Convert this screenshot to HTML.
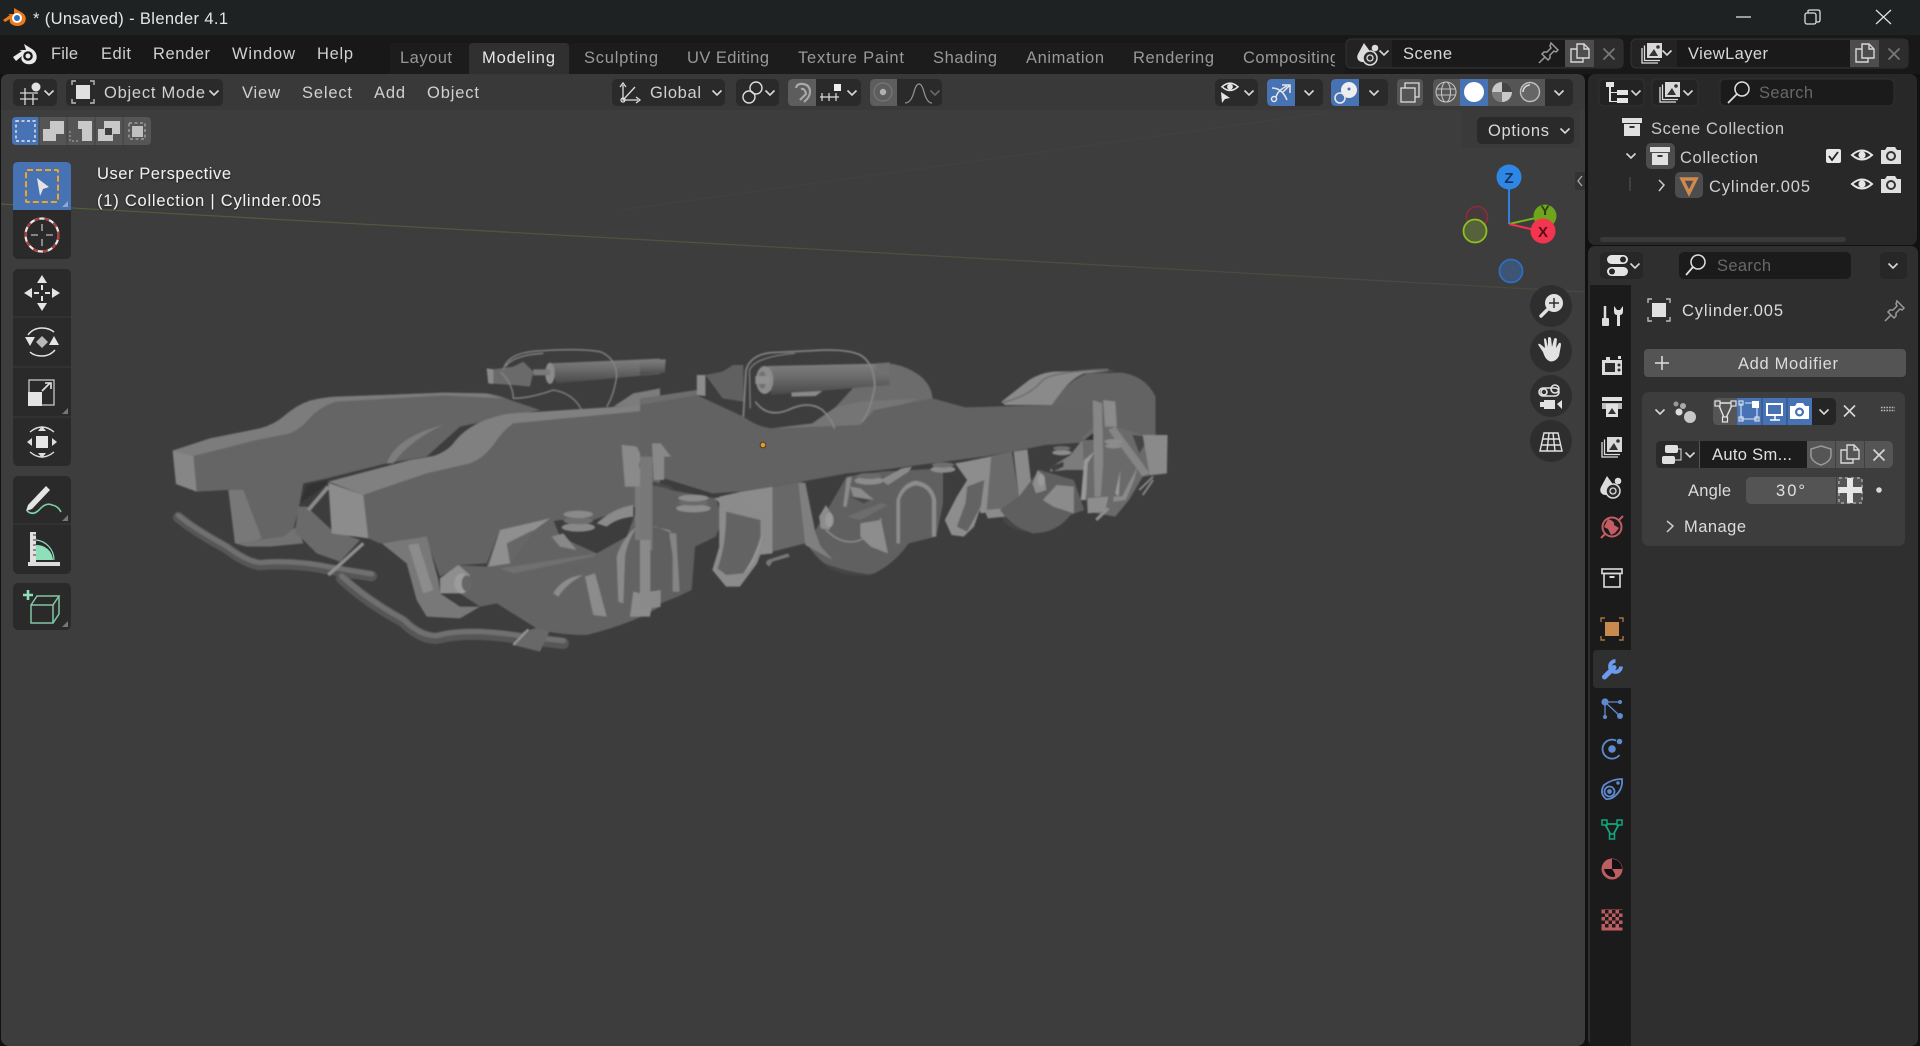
<!DOCTYPE html>
<html><head><meta charset="utf-8"><title>Blender 4.1</title>
<style>html,body{margin:0;padding:0;background:#111;overflow:hidden}svg{display:block}text{font-family:"Liberation Sans",sans-serif;font-size:16.5px;fill:#d0d0d0}</style></head>
<body>
<svg width="1920" height="1046" viewBox="0 0 1920 1046" xmlns="http://www.w3.org/2000/svg">
<defs>
<path id="c" d="M-4.5-2.5 0 2 4.5-2.5" fill="none" stroke="#d8d8d8" stroke-width="1.6"/>
<path id="x" d="M-5.5-5.5 5.5 5.5M5.5-5.5-5.5 5.5" fill="none" stroke="#d8d8d8" stroke-width="1.6"/>
<g id="copy" fill="none" stroke="#d8d8d8" stroke-width="1.4"><path d="M-3-9H4L9-4V5H-3Z"/><path d="M4-9V-4H9"/><path d="M-3-4H-9V9H3V5"/></g>
<g id="eye"><path d="M-10 0Q0-9 10 0Q0 9-10 0Z" fill="none" stroke="#e6e6e6" stroke-width="2"/><circle r="3.6" fill="#e6e6e6"/></g>
<g id="cam"><path d="M-10-6H-6L-4-9H4L6-6H10V8H-10Z" fill="#e0e0e0"/><circle r="5" fill="#333"/><circle r="3" fill="#e0e0e0"/></g>
<g id="obj"><path d="M-11-7V-11H-7M7-11H11V-7M11 7V11H7M-7 11H-11V7" fill="none" stroke-width="1.4"/><rect x="-7" y="-7" width="14" height="14" stroke="none"/></g>
<g id="img" fill="none" stroke="#ddd" stroke-width="1.3"><path d="M-10-5V10H6"/><path d="M-7.500-7.500V7.500H8"/><rect x="-5" y="-10" width="15" height="15" fill="#d8d8d8" stroke="none"/><path d="M-3 3 2-4 6 3Z" fill="#333" stroke="none"/><circle cx="6" cy="-6" r="1.800" fill="#333" stroke="none"/></g>
<g id="scene"><path d="M-4-11C0-5 3-3 2 2C0 6-2 8-5 8C-10 8-12 4-10 0Z" fill="#dcdcdc"/><circle cx="7" cy="-6" r="3.300" fill="#dcdcdc"/><circle cx="2" cy="4" r="7" fill="#2b2b2b" stroke="#dcdcdc" stroke-width="1.500"/><circle cx="2" cy="4" r="3" fill="none" stroke="#dcdcdc" stroke-width="1.300"/></g>
<g id="pin" fill="none" stroke="#9a9a9a" stroke-width="1.500"><path d="M2-10 9-3 7-1 5-2 1 2 1 5-1 7-7 1-5-1H-2L2-5 1-7Z"/><path d="M-4 4-10 10"/></g>
<g id="box"><rect x="-10" y="-9" width="20" height="5" fill="#e0e0e0"/><path d="M-8-3H8V9H-8Z" fill="#e0e0e0"/><rect x="-2.500" y="-1" width="5" height="2" fill="#333"/></g>
<linearGradient id="cy" x1="0" y1="0" x2="0" y2="1"><stop offset="0" stop-color="#7e7e7e"/><stop offset=".45" stop-color="#6a6a6a"/><stop offset="1" stop-color="#484848"/></linearGradient>
<linearGradient id="gl" x1="0" y1="0" x2="1" y2="0"><stop offset="0" stop-color="#4f6038"/><stop offset=".4" stop-color="#4b5640"/><stop offset="1" stop-color="#47483f"/></linearGradient>
<clipPath id="tabclip"><rect x="1230" y="36" width="105" height="36"/></clipPath>
<clipPath id="vp"><rect x="1" y="74" width="1584" height="972" rx="8"/></clipPath>
<filter id="bl" x="-5%" y="-5%" width="110%" height="110%"><feGaussianBlur stdDeviation=".7"/></filter>
<filter id="ts" x="-5%" y="-20%" width="110%" height="140%"><feDropShadow dx="0" dy="1" stdDeviation="1" flood-color="#000" flood-opacity=".6"/></filter>
</defs>

<rect width="1920" height="1046" fill="#111"/>
<rect width="1920" height="35" fill="#1e2223"/>
<rect y="35" width="1920" height="39" fill="#181818"/>

<!-- title bar -->
<path d="M3 20 10 15 8 14H14L14 8 21 12C25 14 27 18 25 22C23 26 17 27 13 25C10 24 9 21 10 19L5 22Z" fill="#ec7a1b"/>
<circle cx="17" cy="18" r="5" fill="#fff"/><circle cx="17" cy="18" r="3" fill="#2a6fb5"/>
<text x="33" y="24" textLength="195" style="fill:#e6e6e6">* (Unsaved) - Blender 4.1</text>
<path d="M1736 17H1751" stroke="#ddd" stroke-width="1.300"/>
<g fill="none" stroke="#ddd" stroke-width="1.300"><rect x="1805" y="13" width="11" height="11" rx="2"/><path d="M1808 13V11Q1808 10 1810 10H1818Q1820 10 1820 12V20Q1820 22 1818 22H1816"/><path d="M1876 10 1891 24M1891 10 1876 24"/></g>

<!-- top bar -->
<g transform="translate(25,54)"><path d="M-12 3-3-3-6-4H1L-1-10 7-5C12-2 13 4 10 8C7 11 1 11-2 8C-4 6-4 4-3 2L-9 7Z" fill="#eaeaea"/><circle cx="3" cy="2" r="4.800" fill="#181818"/><circle cx="3" cy="2" r="2.500" fill="#eaeaea"/></g>
<text x="51" y="59" textLength="27">File</text><text x="101" y="59" textLength="30">Edit</text><text x="153" y="59" textLength="57">Render</text><text x="232" y="59" textLength="63">Window</text><text x="317" y="59" textLength="36">Help</text>
<rect x="390" y="43" width="955" height="31" fill="#1c1c1c"/>
<path d="M469 74V47Q469 43 473 43H565Q569 43 569 47V74Z" fill="#303030"/>
<text x="400" y="63" textLength="52" style="fill:#999">Layout</text><text x="482" y="63" textLength="73" style="fill:#e6e6e6">Modeling</text><text x="584" y="63" textLength="74" style="fill:#999">Sculpting</text><text x="687" y="63" textLength="82" style="fill:#999">UV Editing</text><text x="798" y="63" textLength="106" style="fill:#999">Texture Paint</text><text x="933" y="63" textLength="64" style="fill:#999">Shading</text><text x="1026" y="63" textLength="78" style="fill:#999">Animation</text><text x="1133" y="63" textLength="81" style="fill:#999">Rendering</text><text x="1243" y="63" textLength="96" clip-path="url(#tabclip)" style="fill:#999">Compositing</text>

<!-- scene selector -->
<rect x="1346" y="39" width="277" height="29" rx="5" fill="#232323" stroke="#333"/>
<rect x="1392" y="40" width="173" height="27" fill="#1a1a1a"/>
<rect x="1565" y="40" width="29" height="27" fill="#4d4d4d"/><rect x="1594" y="40" width="29" height="27" fill="#2d2d2d"/>
<use href="#scene" x="1368" y="54"/><use href="#c" x="1384" y="53"/>
<text x="1403" y="59" textLength="49" style="fill:#d8d8d8">Scene</text>
<use href="#pin" x="1549" y="53"/><use href="#copy" x="1580" y="53"/><g opacity=".45"><use href="#x" x="1609" y="54"/></g>
<rect x="1631" y="39" width="277" height="29" rx="5" fill="#232323" stroke="#333"/>
<rect x="1677" y="40" width="173" height="27" fill="#1a1a1a"/>
<rect x="1850" y="40" width="29" height="27" fill="#4d4d4d"/><rect x="1879" y="40" width="29" height="27" fill="#2d2d2d"/>
<use href="#img" x="1652" y="53"/><use href="#c" x="1667" y="53"/>
<text x="1688" y="59" textLength="80" style="fill:#d8d8d8">ViewLayer</text>
<use href="#copy" x="1865" y="53"/><g opacity=".45"><use href="#x" x="1894" y="54"/></g>

<!-- viewport -->
<rect x="1" y="74" width="1584" height="972" rx="8" fill="#3d3d3d"/>
<path d="M1 110V82Q1 74 9 74H1577Q1585 74 1585 82V110Z" fill="#393939"/>
<g clip-path="url(#vp)">
<rect x="0" y="200" width="1585" height="96" fill="none"/>
<path d="M0 204 1585 292" stroke="url(#gl)" stroke-width="1.200" fill="none"/>
<path d="M620 210 1325 113" stroke="#424242" stroke-width="1"/>
</g>

<!-- MODEL -->
<g filter="url(#bl)">
<g transform="translate(160,330) scale(.33333)">
<!-- far frame -->
<path d="M48 462 38 362 150 325 300 295Q340 285 370 260Q410 225 450 212Q490 202 530 200L850 188 980 190Q1020 195 1050 210L1140 240 900 290 800 380 680 400 500 445 430 460 415 540 400 600 360 635 270 640 225 640 205 480 110 485Z" fill="#656565"/>
<path d="M38 362 150 325 300 295Q340 285 370 260Q410 225 450 212Q490 202 530 200L850 188 980 190 1030 205 850 196 530 215Q490 225 455 258Q425 295 390 310L290 330 100 378Z" fill="#7b7b7b"/>
<path d="M38 362 100 378 110 485 48 462Z" fill="#868686"/>
<path d="M205 480 250 480 305 625 260 640 225 640Z" fill="#787878"/>
<path d="M225 640 370 620 410 590 430 640 330 650 260 650Z" fill="#727272"/>
<path d="M680 400Q710 320 850 285Q750 330 700 400Z" fill="#7d7d7d"/>
<path d="M415 530 440 530 515 600 600 630 540 695 470 670 430 630 405 610Z" fill="#6b6b6b"/>
<path d="M445 540 505 470" stroke="#8a8a8a" stroke-width="12" fill="none"/>
<path d="M420 520 440 465 505 450 500 465Z" fill="#333"/>
<!-- pipes -->
<path d="M55 562Q100 600 200 655Q260 700 300 705Q400 695 520 720L635 738" fill="none" stroke="#565656" stroke-width="32" stroke-linecap="round" stroke-linejoin="round"/>
<path d="M55 556Q100 594 200 649Q260 694 300 698Q400 688 520 713L635 732" fill="none" stroke="#6f6f6f" stroke-width="15" stroke-linecap="round" stroke-linejoin="round"/>
<path d="M545 745Q620 815 730 875Q780 925 830 925Q920 900 1080 925L1210 940" fill="none" stroke="#565656" stroke-width="34" stroke-linecap="round" stroke-linejoin="round"/>
<path d="M545 738Q620 808 730 868Q780 918 830 917Q920 892 1080 917L1210 932" fill="none" stroke="#6f6f6f" stroke-width="16" stroke-linecap="round" stroke-linejoin="round"/>
<path d="M505 735 610 640" stroke="#8f8f8f" stroke-width="10"/>
<path d="M1090 905 1180 880 1140 965 1060 945Z" fill="#686868"/>
<path d="M1060 945 1105 898" stroke="#999" stroke-width="6"/>
<!-- near frame -->
<path d="M610 495 800 430 930 400Q970 385 1000 345Q1030 300 1060 280L1500 238 1500 560 1420 530 1300 570 1200 570 1020 600 980 700 900 705 840 740 800 630 700 635 660 640 625 625Z" fill="#636363"/>
<path d="M505 455 750 390 820 378Q860 365 880 340Q920 285 1000 262Q1030 252 1060 250L1500 222 1500 238 1060 280Q1030 300 1000 345Q970 385 930 400L800 430 610 495Z" fill="#808080"/>
<path d="M505 458 610 495 625 625 515 610Z" fill="#8c8c8c"/>
<path d="M665 640 800 620 835 750 840 790 900 830 960 830 900 865 800 860 770 810 740 700Z" fill="#787878"/>
<path d="M745 645 775 640 820 780 790 790Z" fill="#8c8c8c"/>
<path d="M840 745 890 705 980 710 1020 600 1180 570 1200 620 1310 670 1400 620 1430 540 1500 540 1500 830Q1420 880 1280 915Q1190 915 1130 895L1010 820 960 830 900 790Z" fill="#636363"/>
<path d="M985 710 1020 600 1130 575 1170 565 1110 610 1050 700Z" fill="#8f8f8f"/>
<path d="M1040 640 1120 600 1110 620 1050 700Z" fill="#666"/>
<path d="M1175 620 1210 610 1250 660 1200 650Z" fill="#888"/>
<ellipse cx="1255" cy="592" rx="50" ry="13" fill="#888"/><ellipse cx="1255" cy="572" rx="44" ry="11" fill="#6e6e6e"/><ellipse cx="1255" cy="553" rx="44" ry="11" fill="#8a8a8a"/>
<path d="M1310 580Q1360 535 1420 525V560Q1370 565 1340 590Z" fill="#8a8a8a"/>
<path d="M1180 790Q1210 740 1270 735Q1220 760 1195 800Z" fill="#8c8c8c"/>
<path d="M1275 740 1305 730 1340 860 1300 855Z" fill="#8c8c8c"/>
<path d="M1370 680Q1390 620 1430 590 1400 640 1395 680L1390 820 1375 815Z" fill="#8a8a8a"/>
<path d="M840 745 895 705 930 735 910 790 840 790Z" fill="#8e8e8e"/>
<ellipse cx="905" cy="760" rx="22" ry="30" fill="#9c9c9c"/><ellipse cx="920" cy="760" rx="15" ry="24" fill="#666"/>
<path d="M1020 715 1310 670 1300 680 1060 730Z" fill="#6f6f6f"/>
<!-- damper -->
<path d="M1385 345 1430 350 1450 390 1450 470 1395 470Z" fill="#8a8a8a"/><path d="M1470 340 1500 340 1500 420 1475 420Z" fill="#8a8a8a"/>
<rect x="1425" y="470" width="55" height="160" fill="#7a7a7a"/><rect x="1445" y="630" width="30" height="170" fill="#8a8a8a"/><circle cx="1455" cy="405" r="18" fill="#666"/><rect x="1452" y="410" width="24" height="60" fill="#5f5f5f"/>
<path d="M1410 860 1420 785 1480 800 1470 860Z" fill="#8c8c8c"/>
<!-- far lump top right -->
<path d="M1360 230 1420 190 1500 175 1500 225Z" fill="#7c7c7c"/>
<!-- cylinder -->
<path d="M1165 100 1500 86V132L1190 160Z" fill="url(#cy)"/>
<ellipse cx="1170" cy="130" rx="14" ry="32" fill="#8b8b8b"/><rect x="1120" y="118" width="50" height="18" fill="#7a7a7a"/>
<path d="M980 115 1000 118 1060 110 1090 95 1120 125 1110 170 1060 165 985 160Z" fill="#6a6a6a"/><path d="M980 115 1000 118 1000 162 985 160Z" fill="#8a8a8a"/>
<g fill="none" stroke="#858585" stroke-width="4"><path d="M1030 120Q1040 65 1150 62Q1260 55 1320 65Q1370 85 1370 140Q1360 200 1340 230"/><path d="M1022 125Q1060 165 1060 205Q1110 205 1180 180Q1240 190 1265 240"/><path d="M1036 110Q1060 75 1150 70"/></g>
</g>
<g transform="translate(640,330) scale(.34435,.33333)">
<!-- far lump -->
<path d="M560 240 640 150 720 100Q770 105 810 135Q850 165 850 215L780 220 680 280 570 285Z" fill="#6c6c6c"/>
<path d="M500 280 570 230 640 215 810 205 720 240 670 270 640 290 380 295Z" fill="#747474"/>
<path d="M0 205 165 180 165 235 0 235Z" fill="#6d6d6d"/>
<!-- rear lobe -->
<path d="M1050 215 1130 150Q1160 130 1200 125L1380 122 1290 130Q1240 150 1200 225L1060 225Z" fill="#8a8a8a"/>
<path d="M1190 235Q1240 150 1300 130L1400 128Q1470 140 1497 200V320L1400 330 1100 350 950 235Z" fill="#636363"/>
<path d="M1050 218Q1130 200 1170 150Q1200 125 1360 118" fill="none" stroke="#707070" stroke-width="5"/>
<!-- main -->
<path d="M0 225 165 195 300 260Q340 290 380 295L640 285 680 240 850 205 945 232 1200 225 1300 240 1320 270 1280 325 1200 340 1080 365 1010 378 700 420 600 430 470 455 290 485 210 490 70 445 0 445Z" fill="#626262"/>
<!-- under left -->
<path d="M40 460 90 480 220 505 240 570 220 620 160 650 150 780 110 800 60 820 0 830 0 470Z" fill="#5f5f5f"/>
<path d="M30 465 100 480 90 470 40 455Z" fill="#484848"/>
<ellipse cx="155" cy="535" rx="50" ry="12" fill="#8c8c8c"/><ellipse cx="155" cy="518" rx="44" ry="9" fill="#6a6a6a"/><ellipse cx="155" cy="504" rx="44" ry="10" fill="#8c8c8c"/>
<path d="M85 610 105 610 115 785 95 785 95 680Z" fill="#858585"/>
<path d="M35 590 85 600 95 610 45 590Z" fill="#858585"/>
<rect x="0" y="380" width="36" height="280" fill="#787878"/><rect x="0" y="630" width="30" height="170" fill="#8a8a8a"/>
<path d="M35 340 60 340 90 380 70 380 70 450 40 450Z" fill="#888"/>
<path d="M0 790 60 780 60 830 0 840Z" fill="#8a8a8a"/>
<!-- block -->
<path d="M295 485 385 470 385 670 300 680 230 700 230 500Z" fill="#8c8c8c"/>
<path d="M385 470 470 455 480 640 385 665Z" fill="#676767"/>
<path d="M215 505Q255 530 245 600L210 720 250 770 290 770 340 700 365 630 375 545 330 545 290 490Z" fill="#8b8b8b"/>
<path d="M250 545 350 570 350 620Q330 690 300 730L250 735 225 715Q250 650 250 545Z" fill="#636363"/>
<path d="M300 730Q350 660 360 590 355 650 320 710Z" fill="#9a9a9a"/>
<path d="M370 690 430 670 435 680 385 695 375 710 365 700Z" fill="#777"/>
<!-- wheel 1 -->
<path d="M490 650Q530 710 590 730Q640 740 680 730Q740 700 780 640L860 620 880 520 880 415 700 425 600 440 510 600Z" fill="#606060"/>
<path d="M525 695Q590 725 680 735 600 745 550 715Z" fill="#444"/>
<path d="M460 460 480 458 510 610 525 650 560 690 480 645Z" fill="#7f7f7f"/>
<path d="M615 440 600 445 590 530 600 530Z" fill="#8a8a8a"/>
<path d="M520 560 540 525 560 560 550 600 525 595Z" fill="#8c8c8c"/><ellipse cx="550" cy="570" rx="12" ry="22" fill="#9a9a9a"/>
<path d="M610 470 640 475 680 510 620 500Z" fill="#8a8a8a"/><path d="M610 500 670 510 650 520Z" fill="#474747"/>
<ellipse cx="665" cy="452" rx="42" ry="12" fill="#8c8c8c"/><ellipse cx="665" cy="438" rx="36" ry="9" fill="#6a6a6a"/>
<path d="M700 450 760 415 790 410 780 425 720 465Z" fill="#8a8a8a"/>
<path d="M640 580 700 570 720 670 670 650 640 620Z" fill="#8d8d8d"/>
<path d="M640 570 720 525 700 520 600 560Z" fill="#6d6d6d"/>
<path d="M540 600Q590 650 640 630Q680 610 700 565" fill="none" stroke="#8c8c8c" stroke-width="4"/>
<path d="M745 640V510Q760 460 800 452Q850 460 860 510V620H848V510Q840 470 800 466Q765 475 755 510V640Z" fill="#8c8c8c"/>
<ellipse cx="880" cy="418" rx="36" ry="10" fill="#8c8c8c"/><ellipse cx="880" cy="405" rx="32" ry="8" fill="#6e6e6e"/>
<!-- brake 2 -->
<path d="M945 395 1025 378 1020 545 990 550 960 470Z" fill="#8d8d8d"/>
<path d="M1020 378 1080 365 1100 500 1040 545 1005 555Z" fill="#6a6a6a"/>
<path d="M915 400 945 395Q990 440 1000 500L970 590 940 620 905 615 885 570 920 500 950 450Z" fill="#8d8d8d"/>
<path d="M950 470 1000 450 990 530 950 605 920 590 945 520Z" fill="#636363"/>
<path d="M1085 365 1125 358 1140 495 1100 500Z" fill="#8a8a8a"/>
<path d="M1000 540 1060 535 1060 560 1010 565Z" fill="#8b8b8b"/>
<!-- wheel 2 -->
<path d="M1045 540Q1085 595 1140 610Q1210 610 1250 555L1290 540 1260 450 1160 420 1100 500Z" fill="#5f5f5f"/>
<path d="M1055 560Q1090 595 1140 608 1090 605 1055 575Z" fill="#464646"/>
<path d="M1140 460 1155 420 1175 440 1180 480 1150 490Z" fill="#8d8d8d"/><ellipse cx="1165" cy="450" rx="10" ry="18" fill="#9a9a9a"/>
<path d="M1170 510 1210 465 1260 470 1260 550 1200 530Z" fill="#8b8b8b"/>
<path d="M1195 410 1250 375 1280 335 1310 335 1290 420 1240 420 1190 425Z" fill="#7b7b7b"/>
<ellipse cx="1225" cy="368" rx="28" ry="8" fill="#8c8c8c"/><ellipse cx="1225" cy="355" rx="25" ry="7" fill="#6d6d6d"/>
<path d="M1190 410 1230 395 1230 410 1200 425Z" fill="#3f3f3f"/>
<!-- rear section right -->
<path d="M1285 320 1320 290 1380 290 1460 315 1530 315 1530 430 1460 440 1420 510 1380 560 1300 545 1290 430Z" fill="#6a6a6a"/>
<path d="M1290 330 1340 290 1320 330Z" fill="#333"/>
<path d="M1430 315 1480 320 1450 370Z" fill="#454545"/>
<path d="M1460 315 1532 315 1530 430 1480 435Z" fill="#8a8a8a"/>
<path d="M1380 290 1480 430 1460 440 1360 300Z" fill="#858585"/>
<ellipse cx="1375" cy="335" rx="26" ry="8" fill="#8c8c8c"/><ellipse cx="1375" cy="348" rx="24" ry="7" fill="#8c8c8c"/>
<path d="M1345 210 1380 215 1385 290 1350 290Z" fill="#8b8b8b"/>
<path d="M1315 210 1342 220 1345 400 1338 500 1320 500Z" fill="#868686"/>
<path d="M1280 510 1290 390 1320 365 1300 400 1295 510Z" fill="#999"/>
<path d="M1300 505 1360 500 1350 545 1300 550Z" fill="#8d8d8d"/>
<path d="M1325 570 1360 535" stroke="#8e8e8e" stroke-width="9"/>
<path d="M1380 490 1395 420 1390 500Z" fill="#999"/><path d="M1400 500 1430 440 1445 410 1435 450 1410 510 1375 515 1375 500Z" fill="#8b8b8b"/>
<path d="M1450 480 1490 440M1460 495 1490 450" stroke="#8f8f8f" stroke-width="5"/>
<!-- cylinder 1 end -->
<path d="M0 90 75 88 72 128 0 135Z" fill="url(#cy)"/>
<!-- block and cylinder 2 -->
<path d="M190 135 240 125 270 105 300 105 300 215 240 205Z" fill="#606060"/>
<path d="M165 135 190 135 190 198 165 195Z" fill="#8c8c8c"/>
<path d="M370 108 725 100 725 165 380 195Z" fill="url(#cy)"/>
<path d="M685 100 725 97 725 130 685 130Z" fill="#707070"/>
<ellipse cx="362" cy="150" rx="25" ry="42" fill="#8c8c8c"/><ellipse cx="355" cy="150" rx="12" ry="26" fill="#6f6f6f"/><rect x="335" y="138" width="40" height="24" fill="#909090"/>
<path d="M440 188 530 183 510 198 440 200Z" fill="#8a8a8a"/>
<g fill="none" stroke="#858585" stroke-width="5" stroke-linejoin="round"><path d="M300 260 308 120Q320 75 380 68L500 62Q600 55 640 75Q680 100 682 170Q670 240 645 275"/><path d="M335 215Q370 265 430 240Q490 210 530 240Q555 265 565 295"/></g>
<path d="M320 235 318 120Q335 80 450 70" fill="none" stroke="#8f8f8f" stroke-width="3"/>
</g>
</g>
<circle cx="763" cy="445" r="3.400" fill="#2a2a2a" opacity=".6"/><circle cx="763" cy="445" r="2.300" fill="#f5941a"/>

<!-- header row -->
<rect x="13" y="79" width="44" height="27" rx="5" fill="#2a2a2a"/>
<g stroke="#d8d8d8" stroke-width="1.300" fill="none"><path d="M20 93H38M20 99H38M25 88V105M33 94V105"/></g><circle cx="36" cy="87" r="4.500" fill="#e2e2e2"/><use href="#c" x="49" y="93"/>
<rect x="66" y="79" width="157" height="27" rx="5" fill="#2a2a2a"/>
<use href="#obj" x="83" y="92" fill="#e0e0e0" stroke="#bbb"/>
<text x="104" y="98" textLength="101">Object Mode</text><use href="#c" x="214" y="93"/>
<text x="242" y="98" textLength="38">View</text><text x="302" y="98" textLength="50">Select</text><text x="374" y="98" textLength="31">Add</text><text x="427" y="98" textLength="52">Object</text>

<rect x="612" y="79" width="113" height="27" rx="5" fill="#2a2a2a"/>
<g stroke="#ddd" stroke-width="1.300" fill="none"><path d="M623 85V100H638"/><path d="M623 100 635 87"/><path d="M620 87 623 83 626 87M636 97 640 100 636 103"/><circle cx="623" cy="100" r="2"/></g>
<text x="650" y="98" textLength="51">Global</text><use href="#c" x="717" y="93"/>
<rect x="736" y="79" width="43" height="27" rx="5" fill="#2a2a2a"/>
<g fill="none" stroke="#ddd" stroke-width="1.400"><circle cx="749" cy="97" r="6"/><circle cx="756" cy="88" r="6"/></g><use href="#c" x="770" y="93"/>
<rect x="788" y="79" width="73" height="27" rx="5" fill="#2a2a2a"/><path d="M793 79H816V106H793Q788 106 788 101V84Q788 79 793 79Z" fill="#5d5d5d"/>
<path d="M796 88Q797 83 803 84Q810 85 810 92Q810 97 804 102M800 100 806 94Q805 88 801 89" fill="none" stroke="#a8a8a8" stroke-width="2.200"/>
<g stroke="#ddd" stroke-width="1.200"><path d="M820 97H839M822 93V101M829 93V101M836 93V101"/></g><rect x="834" y="84" width="7" height="7" fill="#eee"/><use href="#c" x="852" y="93"/>
<rect x="870" y="79" width="72" height="27" rx="5" fill="#2a2a2a"/><path d="M875 79H897V106H875Q870 106 870 101V84Q870 79 875 79Z" fill="#5d5d5d"/>
<circle cx="883" cy="92" r="9" fill="none" stroke="#727272" stroke-width="1.500"/><circle cx="883" cy="92" r="3.200" fill="#b0b0b0"/>
<path d="M905 103Q911 103 914 92Q916 84 919 84Q922 84 924 92Q927 103 932 103" fill="none" stroke="#909090" stroke-width="1.300"/><g opacity=".35"><use href="#c" x="935" y="93"/></g>

<rect x="1215" y="79" width="43" height="27" rx="5" fill="#2a2a2a"/>
<g transform="translate(1230,90)"><use href="#eye" transform="scale(.8)" y="-4"/><path d="M-9 2-8 13-5 9 0 8Z" fill="#e6e6e6"/></g><use href="#c" x="1249" y="93"/>
<rect x="1267" y="79" width="56" height="27" rx="5" fill="#2a2a2a"/><path d="M1272 79H1295V106H1272Q1267 106 1267 101V84Q1267 79 1272 79Z" fill="#4772b3"/>
<g fill="none" stroke="#e8e8e8" stroke-width="1.500"><circle cx="1274" cy="99" r="2.500"/><path d="M1276 97Q1278 90 1287 86M1282 85H1290V93M1290 85 1283 92M1272 88Q1282 88 1287 100"/></g><use href="#c" x="1309" y="93"/>
<rect x="1331" y="79" width="57" height="27" rx="5" fill="#2a2a2a"/><path d="M1336 79H1359V106H1336Q1331 106 1331 101V84Q1331 79 1336 79Z" fill="#4772b3"/>
<circle cx="1349" cy="90" r="8" fill="#eee"/><circle cx="1340" cy="98" r="5" fill="none" stroke="#e8e8e8" stroke-width="1.600"/><circle cx="1349" cy="89" r="1.500" fill="#4772b3"/><use href="#c" x="1374" y="93"/>
<rect x="1397" y="79" width="26" height="27" rx="4" fill="#555"/>
<g fill="none" stroke="#ddd" stroke-width="1.300"><rect x="1401" y="88" width="14" height="14"/><path d="M1405 88V83H1419V97H1415"/></g>
<rect x="1433" y="79" width="140" height="27" rx="5" fill="#2a2a2a"/><path d="M1438 79H1545V106H1438Q1433 106 1433 101V84Q1433 79 1438 79Z" fill="#555"/><rect x="1460" y="79" width="28" height="27" fill="#4772b3"/>
<g fill="none" stroke="#c0c0c0" stroke-width="1.100"><circle cx="1446" cy="92" r="10"/><ellipse cx="1446" cy="92" rx="4.500" ry="10"/><path d="M1436 89H1456M1436 95H1456"/></g>
<circle cx="1474" cy="92" r="10" fill="#fff"/>
<circle cx="1502" cy="92" r="10" fill="#c8c8c8"/><path d="M1502 92V82A10 10 0 0 1 1512 92Z" fill="#444"/><path d="M1502 92H1492A10 10 0 0 0 1502 102Z" fill="#7a7a7a"/>
<circle cx="1530" cy="92" r="9.500" fill="#666" stroke="#c0c0c0" stroke-width="1.400"/><path d="M1523 92A7 7 0 0 1 1530 85" stroke="#ddd" fill="none" stroke-width="1.500"/>
<use href="#c" x="1559" y="93"/>
<rect x="1462" y="110" width="118" height="38" fill="#3a3a3a"/>
<rect x="1477" y="117" width="97" height="27" rx="5" fill="#2a2a2a"/><text x="1488" y="136" textLength="61" style="fill:#d8d8d8">Options</text><use href="#c" x="1565" y="131"/>
<rect x="1575" y="172" width="10" height="18" fill="#333"/><path d="M1582 176 1578 181 1582 186" fill="none" stroke="#aaa" stroke-width="1.300"/>

<!-- select mode row -->
<rect x="12" y="117" width="139" height="28" rx="4" fill="#555"/><path d="M16 117H39V145H16Q12 145 12 141V121Q12 117 16 117Z" fill="#4772b3"/>
<rect x="16" y="121" width="19" height="20" fill="none" stroke="#e8e8e8" stroke-width="1.400" stroke-dasharray="3 2.500"/>
<path d="M50 121H64V134H56V141H43V129H50Z" fill="#c8c8c8"/>
<path d="M78 121H92V141H82V129H78Z" fill="#c8c8c8"/><path d="M70 131V141H80" fill="none" stroke="#aaa" stroke-dasharray="2 2"/>
<path d="M104 121H120V134H113V141H98V129H104Z" fill="#c8c8c8"/><rect x="105" y="128" width="7" height="7" fill="#3d3d3d"/>
<rect x="129" y="123" width="16" height="16" fill="none" stroke="#aaa" stroke-width="1.300" stroke-dasharray="3 2.500"/><rect x="132" y="126" width="11" height="11" fill="#c0c0c0"/>
<g stroke="#3e3e3e"><path d="M67 117V145M95 117V145M123 117V145M39 117V145"/></g>

<!-- toolbar -->
<rect x="13" y="162" width="58" height="97" rx="5" fill="#2a2a2a"/><path d="M18 162H66Q71 162 71 167V210H13V167Q13 162 18 162Z" fill="#4772b3"/>
<rect x="26" y="170" width="32" height="32" rx="1" fill="none" stroke="#f0a428" stroke-width="2" stroke-dasharray="6 3"/>
<path d="M37 178 49 187 43 189 40 196Z" fill="#e4e4e4"/><path d="M62 207 68 201V207Z" fill="#8fa8d0"/>
<circle cx="42" cy="235" r="16.500" fill="none" stroke="#e8e8e8" stroke-width="2.200"/><circle cx="42" cy="235" r="16.500" fill="none" stroke="#b33a3a" stroke-width="2.200" stroke-dasharray="5 5"/>
<path d="M42 224V231M42 239V246M31 235H38M46 235H53" stroke="#bbb" stroke-width="1.300"/>
<rect x="13" y="269" width="58" height="197" rx="5" fill="#2a2a2a"/>
<path d="M13 317H71M13 367H71M13 417H71" stroke="#3a3a3a"/>
<g fill="#e4e4e4"><path d="M42 275 47 283H37ZM42 311 37 303H47ZM24 293 32 288V298ZM60 293 52 298V288Z"/><path d="M41 285H43V290H41ZM41 296H43V301H41ZM34 292H39V294H34ZM45 292H50V294H45Z"/></g>
<g fill="none" stroke="#e4e4e4" stroke-width="1.500"><path d="M28 335Q33 328 42 328Q49 328 54 332"/><path d="M55 350Q50 356 42 356Q34 356 30 352"/></g><path d="M25 337H35L30 346ZM49 345H59L54 336Z" fill="#e4e4e4"/><path d="M42 336 48 342 42 348 36 342Z" fill="#b8b8b8"/>
<rect x="29" y="380" width="25" height="25" fill="none" stroke="#c8c8c8" stroke-width="1.300"/><rect x="28" y="392" width="14" height="14" fill="#e4e4e4"/><path d="M42 391 50 383M45 383H51V389" fill="none" stroke="#e4e4e4" stroke-width="1.600"/><path d="M62 414 68 408V414Z" fill="#777"/>
<g fill="none" stroke="#ddd" stroke-width="1.400"><path d="M30 432Q36 427 42 427Q48 427 54 432M54 452Q48 457 42 457Q36 457 30 452"/></g><rect x="36" y="436" width="12" height="12" fill="#e6e6e6"/><path d="M42 426 46 431H38ZM42 458 38 453H46ZM27 442 32 438V446ZM57 442 52 446V438Z" fill="#ddd"/>
<rect x="13" y="476" width="58" height="98" rx="5" fill="#2a2a2a"/><path d="M13 524H71" stroke="#3a3a3a"/>
<path d="M28 505 46 486 50 490 32 509 26 511Z" fill="#e4e4e4"/><path d="M27 511Q33 516 39 510Q46 502 52 505Q58 506 61 512" fill="none" stroke="#7bd0a4" stroke-width="1.600"/><path d="M62 521 68 515V521Z" fill="#777"/>
<path d="M30 532H36V565H30Z" fill="#e0e0e0"/><path d="M36 535H33M36 540H33M36 545H33M36 550H33M36 555H33" stroke="#333"/><path d="M36 545A16 16 0 0 1 53 560H36Z" fill="#8ee0b8"/><path d="M36 540A20 20 0 0 1 54 560" fill="none" stroke="#8ee0b8" stroke-width="1.200"/><path d="M28 562H60V566H28Z" fill="#dcdcdc"/>
<rect x="13" y="583" width="58" height="47" rx="5" fill="#2a2a2a"/>
<path d="M28 590V600M23 595H33" stroke="#8ee0b8" stroke-width="2.600"/>
<g fill="none" stroke="#82c8a4" stroke-width="1.500"><path d="M31 605H53V623H31ZM31 605 37 596H59L53 605M59 596V614L53 623"/></g><path d="M62 627 68 621V627Z" fill="#777"/>

<g filter="url(#ts)"><text x="97" y="179" textLength="134" style="fill:#f0f0f0">User Perspective</text>
<text x="97" y="206" textLength="224" style="fill:#f0f0f0">(1) Collection | Cylinder.005</text></g>

<!-- gizmo -->
<circle cx="1477" cy="217" r="10.500" fill="#47393c" stroke="#8c2d3e" stroke-width="1.500"/>
<circle cx="1475" cy="231" r="11.500" fill="#56623a" stroke="#8ec01e" stroke-width="1.800"/>
<circle cx="1511" cy="271" r="11.500" fill="#3d5474" stroke="#2f6ec0" stroke-width="1.800"/>
<path d="M1509 224V188" stroke="#2e83e0" stroke-width="2"/><path d="M1509 224 1540 217" stroke="#79b31c" stroke-width="2"/><path d="M1509 224 1535 230" stroke="#f0324c" stroke-width="2"/>
<circle cx="1509" cy="177" r="12.500" fill="#2e86e6"/><circle cx="1545" cy="216" r="11.500" fill="#6ea51c"/><circle cx="1543" cy="231" r="12.500" fill="#f5344f"/>
<text x="1509" y="183" text-anchor="middle" style="fill:#14335a;font-weight:bold;font-size:15px">Z</text><text x="1545" y="215" text-anchor="middle" style="fill:#2a3f0c;font-weight:bold;font-size:14px">Y</text><text x="1543" y="237" text-anchor="middle" style="fill:#551019;font-weight:bold;font-size:15px">X</text>

<!-- nav -->
<circle cx="1551" cy="306" r="21" fill="#2e2e2e"/><circle cx="1551" cy="351" r="21" fill="#2e2e2e"/><circle cx="1551" cy="396" r="21" fill="#2e2e2e"/><circle cx="1551" cy="441" r="21" fill="#2e2e2e"/>
<circle cx="1554" cy="303" r="9" fill="#e2e2e2"/><path d="M1554 298V308M1549 303H1559" stroke="#2e2e2e" stroke-width="1.500"/><path d="M1547 310 1541 316" stroke="#e2e2e2" stroke-width="3.400" stroke-linecap="round"/>
<path d="M1543 352 1539 346Q1537 343 1540 344L1545 348 1544 340Q1544 337 1546 339L1548 347 1548 338Q1549 336 1551 338L1552 347 1554 339Q1555 337 1557 339L1556 348 1559 343Q1561 342 1561 345L1559 356Q1555 363 1549 361Q1545 359 1543 352Z" fill="#e2e2e2"/>
<g fill="none" stroke="#e2e2e2" stroke-width="1.600"><rect x="1539" y="388" width="20" height="8" rx="4"/><circle cx="1544" cy="392" r="3"/><circle cx="1555" cy="389" r="4"/></g><rect x="1544" y="400" width="11" height="9" fill="#e2e2e2"/><path d="M1557 404 1562 400V409ZM1540 402H1544V407H1540Z" fill="#e2e2e2"/>
<g fill="none" stroke="#e2e2e2" stroke-width="1.400"><path d="M1544 433H1558L1562 451H1540ZM1543 439H1559M1541 445H1561M1549 433 1547 451M1553 433 1555 451"/></g>

<!-- OUTLINER -->
<rect x="1588" y="74" width="329" height="171" rx="7" fill="#282828"/>
<rect x="1599" y="79" width="45" height="27" rx="5" fill="#232323" stroke="#313131"/>
<g fill="#e4e4e4"><rect x="1606" y="82" width="8" height="5"/><rect x="1617" y="90" width="11" height="5"/><rect x="1617" y="98" width="11" height="5"/><path d="M1609 87H1611V101H1617V102H1609ZM1609 92H1617V93H1609Z"/></g><use href="#c" x="1636" y="93"/>
<rect x="1652" y="79" width="46" height="27" rx="5" fill="#232323" stroke="#313131"/><use href="#img" x="1670" y="92"/><use href="#c" x="1688" y="93"/>
<rect x="1720" y="79" width="174" height="27" rx="5" fill="#1b1b1b" stroke="#313131"/>
<g fill="none" stroke="#e0e0e0" stroke-width="1.500"><circle cx="1742" cy="89" r="7"/><path d="M1737 94 1728 103" stroke-width="1.800"/></g><text x="1759" y="98" textLength="54" style="fill:#686868">Search</text>
<use href="#box" x="1632" y="127"/><text x="1651" y="134" textLength="133" style="fill:#c8c8c8">Scene Collection</text>
<use href="#c" x="1631" y="156"/><rect x="1646" y="143" width="29" height="26" rx="5" fill="#4d4d4d"/><use href="#box" x="1660" y="156"/>
<text x="1680" y="163" textLength="78" style="fill:#cdcdcd">Collection</text>
<rect x="1826" y="149" width="15" height="14" rx="2" fill="#e8e8e8"/><path d="M1829 156 1832 160 1838 152" fill="none" stroke="#222" stroke-width="1.800"/>
<use href="#eye" x="1862" y="155"/><use href="#cam" x="1891" y="156"/>
<path d="M1630 177V191" stroke="#555"/><path d="M1659 180 1664 185 1659 191" fill="none" stroke="#ccc" stroke-width="1.500"/>
<rect x="1675" y="172" width="28" height="26" rx="5" fill="#4d4d4d"/><path d="M1682 179H1696L1689 193Z" fill="none" stroke="#cf8a4e" stroke-width="3.400"/>
<text x="1709" y="192" textLength="101" style="fill:#d0d0d0">Cylinder.005</text>
<use href="#eye" x="1862" y="184"/><use href="#cam" x="1891" y="185"/>
<rect x="1600" y="237" width="246" height="5" rx="2.500" fill="#3a3a3a"/>

<!-- PROPERTIES -->
<rect x="1588" y="246" width="330" height="800" rx="7" fill="#2f2f2f"/>
<rect x="1590" y="285" width="41" height="761" fill="#1b1b1b"/>
<rect x="1600" y="252" width="43" height="27" rx="5" fill="#272727"/>
<rect x="1607" y="255" width="21" height="9" rx="4.500" fill="#e4e4e4"/><circle cx="1623" cy="259.500" r="3" fill="#272727"/><rect x="1607" y="267" width="21" height="9" rx="4.500" fill="#e4e4e4"/><circle cx="1612" cy="271.500" r="3" fill="#272727"/><use href="#c" x="1635" y="266"/>
<rect x="1679" y="252" width="172" height="27" rx="5" fill="#1b1b1b"/><g fill="none" stroke="#e0e0e0" stroke-width="1.500"><circle cx="1698" cy="262" r="7"/><path d="M1693 267 1686 275" stroke-width="1.800"/></g><text x="1717" y="271" textLength="54" style="fill:#686868">Search</text>
<rect x="1880" y="252" width="27" height="27" rx="5" fill="#272727"/><use href="#c" x="1893" y="266"/>

<use href="#obj" x="1659" y="310" fill="#e0e0e0" stroke="#bbb"/><text x="1682" y="316" textLength="101" style="fill:#dcdcdc">Cylinder.005</text><use href="#pin" x="1895" y="311"/>
<rect x="1644" y="349" width="262" height="28" rx="4" fill="#545454"/><path d="M1655 363H1669M1662 356V370" stroke="#e0e0e0" stroke-width="1.500"/><text x="1738" y="369" textLength="100" style="fill:#dcdcdc">Add Modifier</text>
<rect x="1642" y="392" width="263" height="154" rx="7" fill="#3d3d3d"/>
<use href="#c" x="1660" y="412"/>
<circle cx="1676" cy="404" r="2.500" fill="#999"/><circle cx="1683" cy="406" r="3" fill="#aaa"/><circle cx="1679" cy="412" r="3.500" fill="#ddd"/><circle cx="1690" cy="417" r="6" fill="#c8c8c8"/>
<rect x="1713" y="398" width="123" height="27" rx="5" fill="#252525"/><path d="M1718 398H1737V425H1718Q1713 425 1713 420V403Q1713 398 1718 398Z" fill="#555"/><rect x="1737" y="398" width="75" height="27" fill="#4772b3"/>
<path d="M1762 398V425M1787 398V425" stroke="#2d4a78"/>
<g fill="none" stroke="#e4e4e4" stroke-width="1.400"><path d="M1718 403H1733L1725 420Z"/></g><g fill="#555" stroke="#e4e4e4" stroke-width="1.200"><rect x="1715" y="401" width="5" height="5"/><rect x="1731" y="401" width="5" height="5"/><rect x="1722.500" y="417" width="5" height="5"/></g>
<g fill="none" stroke="#dfe6f2" stroke-width="1.100"><path d="M1741 403V419H1757V407M1745 403H1752"/><rect x="1739" y="401" width="4" height="4"/><rect x="1739" y="417" width="4" height="4"/><rect x="1755" y="417" width="4" height="4"/></g><rect x="1752" y="401" width="7" height="7" fill="#fff"/>
<rect x="1766" y="403" width="17" height="13" fill="#fff"/><rect x="1768" y="405" width="13" height="9" fill="#4772b3"/><path d="M1770 420H1780M1775 416V420" stroke="#fff" stroke-width="1.500"/>
<path d="M1790 406H1795L1797 403H1803L1805 406H1809V419H1790Z" fill="#fff"/><circle cx="1799.500" cy="412" r="4.500" fill="#4772b3"/><circle cx="1799.500" cy="412" r="2.300" fill="#fff"/>
<use href="#c" x="1824" y="412"/><use href="#x" x="1849.500" y="411"/>
<path d="M1881 407.500H1895M1881 410.500H1895" stroke="#c0c0c0" stroke-width="1.500" stroke-dasharray="1.500 1.200"/>
<rect x="1656" y="441" width="237" height="27" rx="5" fill="#555"/>
<path d="M1661 441H1699V468H1661Q1656 468 1656 463V446Q1656 441 1661 441Z" fill="#2a2a2a"/><rect x="1700" y="441" width="107" height="27" fill="#1c1c1c"/>
<path d="M1835.500 441V468M1864.500 441V468" stroke="#3f3f3f"/>
<rect x="1665" y="445" width="13" height="8" rx="2" fill="#e0e0e0"/><rect x="1662" y="456" width="13" height="8" rx="2" fill="#e0e0e0"/><path d="M1678 449H1681V460H1675" fill="none" stroke="#ddd"/><use href="#c" x="1690" y="455"/>
<text x="1712" y="460" textLength="80" style="fill:#e0e0e0">Auto Sm...</text>
<path d="M1821 446 1831 449V456Q1830 462 1821 465Q1812 462 1811 456V449Z" fill="none" stroke="#999" stroke-width="1.500"/>
<use href="#copy" x="1850" y="454"/><use href="#x" x="1879" y="455"/>
<text x="1688" y="496" textLength="43" style="fill:#dcdcdc">Angle</text>
<rect x="1746" y="477" width="117" height="27" rx="5" fill="#545454"/><path d="M1836.500 477V504" stroke="#3f3f3f"/><text x="1776" y="496" textLength="29" style="fill:#e0e0e0">30°</text>
<g fill="#e6e6e6"><rect x="1838" y="487" width="24" height="6"/><rect x="1847" y="478" width="6" height="25"/></g><rect x="1839" y="478" width="23" height="25" fill="none" stroke="#ccc" stroke-width="1" stroke-dasharray="3 3"/>
<circle cx="1879" cy="490" r="2.800" fill="#d8d8d8"/>
<path d="M1667 521 1673 526 1667 532" fill="none" stroke="#ccc" stroke-width="1.500"/><text x="1684" y="532" textLength="62" style="fill:#dcdcdc">Manage</text>

<!-- tab icons -->
<g transform="translate(1612,316)"><rect x="-10" y="2" width="7" height="8" rx="1" fill="#ddd"/><path d="M-7-10V2" stroke="#ddd" stroke-width="2.500"/><path d="M2-10 2-5Q2-1 5-1V10H8V-1Q11-1 11-5V-10L8-6H5Z" fill="#e0e0e0"/></g>
<g transform="translate(1612,366)"><path d="M-10-6H-6V-9H-2V-6H10V9H-10Z" fill="#dcdcdc"/><path d="M6-10H9V-7H6Z" fill="#ddd"/><rect x="-7" y="-3" width="10" height="9" fill="#2b2b2b"/><circle cx="7" cy="-1" r="1.500" fill="#2b2b2b"/><circle cx="7" cy="4" r="1.500" fill="#2b2b2b"/></g>
<g transform="translate(1612,407)"><rect x="-10" y="-10" width="20" height="4" fill="#e0e0e0"/><path d="M-10-4H10V2H-10Z" fill="#bbb"/><rect x="-6" y="-3" width="12" height="13" fill="#e0e0e0"/><path d="M-4 7 0 1 4 7Z" fill="#333"/></g>
<use href="#img" x="1612" y="447"/>
<use href="#scene" x="1611" y="487"/>
<g transform="translate(1612,527)"><circle r="9.500" fill="none" stroke="#c45c64" stroke-width="2"/><path d="M-4-8Q3-6 2-2L7 1 3 6-1 8-4 2-8 0Z" fill="#c45c64"/><path d="M-11 11-7 7M7-7 11-11" stroke="#c45c64" stroke-width="2"/></g>
<g transform="translate(1612,578)" fill="none" stroke="#ddd" stroke-width="1.600"><rect x="-10" y="-9" width="20" height="4.500"/><rect x="-8" y="-4.500" width="16" height="13.500"/><rect x="-2.500" y="-2" width="5" height="2" fill="#ddd" stroke="none"/></g>
<use href="#obj" x="1612" y="629" fill="#c98a50" stroke="#a87542"/>
<path d="M1597 650H1631V688H1597Q1593 688 1593 684V654Q1593 650 1597 650Z" fill="#2f2f2f"/>
<g transform="translate(1612,669)"><path d="M-7.500 8 2-1.500" stroke="#6c9bee" stroke-width="5" stroke-linecap="round"/><path d="M9-2.500A5.500 5.500 0 1 1 3.500-8" fill="none" stroke="#6c9bee" stroke-width="3.800"/></g>
<g transform="translate(1612,709)" fill="#5f8ad0" stroke="none"><circle cx="-7" cy="-7" r="3.600"/><circle cx="8" cy="-7" r="2"/><circle cx="-7" cy="8" r="2"/><circle cx="8" cy="7" r="3"/><path d="M-7-7H8M-7-7V8M-7-7 8 7" stroke="#5f8ad0" stroke-width="1.300"/></g>
<g transform="translate(1612,749)"><circle r="3.800" fill="#5f8ad0"/><path d="M7.500 6A9.500 9.500 0 1 1 4-8.500" fill="none" stroke="#5f8ad0" stroke-width="1.800"/><circle cx="7.500" cy="-7.500" r="2.800" fill="#5f8ad0"/></g>
<g transform="translate(1612,789)" fill="none" stroke="#5f8ad0" stroke-width="1.800"><path d="M-8-4Q0-10 10-10Q11-2 6 4Q0 11-6 10Q-13 4-8-4Z"/><circle cx="-2.500" cy="2.500" r="5"/><circle cx="-2.500" cy="2.500" r="1.500" fill="#5f8ad0"/><circle cx="6" cy="-6" r=".8" fill="#5f8ad0"/></g>
<g transform="translate(1612,829)"><path d="M-7-5H7L0 8Z" fill="none" stroke="#10a87c" stroke-width="1.800"/><g fill="#1b1b1b" stroke="#10a87c" stroke-width="1.500"><rect x="-10" y="-9" width="5" height="5"/><rect x="5" y="-9" width="5" height="5"/><rect x="-2.500" y="5" width="5" height="5"/></g></g>
<g transform="translate(1612,869)"><circle r="10.500" fill="#bd5d62"/><path d="M0 0V-10A10 10 0 0 1 10 0Z" fill="#111"/><path d="M0 0H-8Q-6 8 2 8Q5 7 0 0Z" fill="#111"/></g>
<g transform="translate(1612,920)"><rect x="-10.500" y="-10.500" width="21" height="21" fill="#bd5d62"/><g fill="#1b1b1b"><rect x="-7" y="-10" width="3.500" height="3.500"/><rect x="0" y="-10" width="3.500" height="3.500"/><rect x="7" y="-10" width="3.500" height="3.500"/><rect x="-10.500" y="-6.500" width="3.500" height="3.500"/><rect x="-3.500" y="-6.500" width="3.500" height="3.500"/><rect x="3.500" y="-6.500" width="3.500" height="3.500"/><rect x="-7" y="-3" width="3.500" height="3.500"/><rect x="0" y="-3" width="3.500" height="3.500"/><rect x="7" y="-3" width="3.500" height="3.500"/><rect x="-10.500" y=".5" width="3.500" height="3.500"/><rect x="-3.500" y=".5" width="3.500" height="3.500"/><rect x="3.500" y=".5" width="3.500" height="3.500"/><rect x="-7" y="4" width="3.500" height="3.500"/><rect x="0" y="4" width="3.500" height="3.500"/><rect x="7" y="4" width="3.500" height="3.500"/></g></g>
</svg>
</body></html>
